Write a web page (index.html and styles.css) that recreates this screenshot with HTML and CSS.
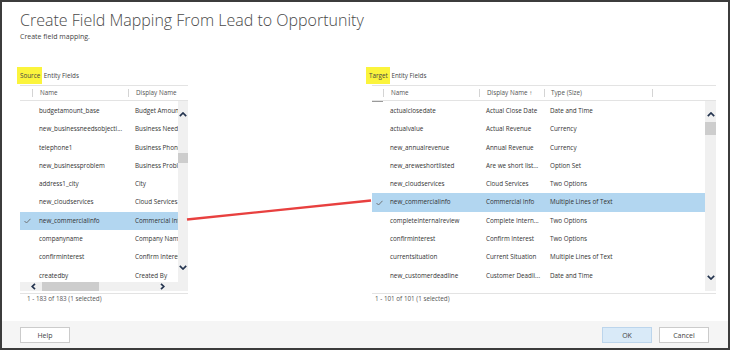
FILE: index.html
```html
<!DOCTYPE html>
<html lang="en">
  <head>
    <meta charset="UTF-8" />
    <title>Create Field Mapping</title>
    <link rel="stylesheet" href="styles.css">
  </head>

  <body>
    <div class="dialog">
      <div class="head">
        <h1 class="title">Create Field Mapping From Lead to Opportunity</h1>
        <p class="subtitle">Create field mapping.</p>
      </div>

      <div class="panels">
        <!-- Source grid -->
        <div class="panel panel-source">
          <div class="label"><span class="mark">Source</span> Entity Fields</div>
          <div class="grid">
            <div class="grid-head">
              <div class="cell c-check"></div>
              <div class="cell c-name">Name</div>
              <div class="cell c-disp">Display Name</div>
            </div>
            <div class="grid-body">
              <div class="grid-main">
                <div class="rows">
                  <div class="row"><div class="c-check"></div><div class="c-name">budgetamount_base</div><div class="c-disp">Budget Amount Base</div></div>
                  <div class="row"><div class="c-check"></div><div class="c-name">new_businessneedsobjecti...</div><div class="c-disp">Business Needs</div></div>
                  <div class="row"><div class="c-check"></div><div class="c-name">telephone1</div><div class="c-disp">Business Phone</div></div>
                  <div class="row"><div class="c-check"></div><div class="c-name">new_businessproblem</div><div class="c-disp">Business Problem</div></div>
                  <div class="row"><div class="c-check"></div><div class="c-name">address1_city</div><div class="c-disp">City</div></div>
                  <div class="row"><div class="c-check"></div><div class="c-name">new_cloudservices</div><div class="c-disp">Cloud Services</div></div>
                  <div class="row selected"><div class="c-check"><svg width="7" height="6" viewBox="0 0 7 6"><polyline points="0.5,3 2.5,5 6.5,0.8" /></svg></div><div class="c-name">new_commercialinfo</div><div class="c-disp">Commercial Info</div></div>
                  <div class="row"><div class="c-check"></div><div class="c-name">companyname</div><div class="c-disp">Company Name</div></div>
                  <div class="row"><div class="c-check"></div><div class="c-name">confirminterest</div><div class="c-disp">Confirm Interest</div></div>
                  <div class="row"><div class="c-check"></div><div class="c-name">createdby</div><div class="c-disp">Created By</div></div>
                </div>
                <div class="hscroll">
                  <svg class="arrow" width="5" height="7" viewBox="0 0 5 7"><polyline points="4,0.8 1.2,3.5 4,6.2" /></svg>
                  <div class="hthumb"></div>
                  <svg class="arrow" width="5" height="7" viewBox="0 0 5 7"><polyline points="1,0.8 3.8,3.5 1,6.2" /></svg>
                </div>
              </div>
              <div class="vscroll">
                <svg class="arrow" width="8" height="5" viewBox="0 0 8 5"><polyline points="0.8,4.2 4,1 7.2,4.2" /></svg>
                <div class="vthumb"></div>
                <svg class="arrow" width="8" height="5" viewBox="0 0 8 5"><polyline points="0.8,0.8 4,4 7.2,0.8" /></svg>
              </div>
            </div>
            <div class="grid-foot">1 - 183 of 183 (1 selected)</div>
          </div>
        </div>

        <!-- Target grid -->
        <div class="panel panel-target">
          <div class="label"><span class="mark">Target</span> Entity Fields</div>
          <div class="grid">
            <div class="grid-head">
              <div class="cell c-check"></div>
              <div class="cell c-name">Name</div>
              <div class="cell c-disp">Display Name &#8593;</div>
              <div class="cell c-type">Type (Size)</div>
              <div class="cell c-rest"></div>
            </div>
            <div class="grid-body">
              <div class="grid-main">
                <div class="rows">
                  <div class="dash"></div>
                  <div class="row"><div class="c-check"></div><div class="c-name">actualclosedate</div><div class="c-disp">Actual Close Date</div><div class="c-type">Date and Time</div></div>
                  <div class="row"><div class="c-check"></div><div class="c-name">actualvalue</div><div class="c-disp">Actual Revenue</div><div class="c-type">Currency</div></div>
                  <div class="row"><div class="c-check"></div><div class="c-name">new_annualrevenue</div><div class="c-disp">Annual Revenue</div><div class="c-type">Currency</div></div>
                  <div class="row"><div class="c-check"></div><div class="c-name">new_areweshortlisted</div><div class="c-disp">Are we short list...</div><div class="c-type">Option Set</div></div>
                  <div class="row"><div class="c-check"></div><div class="c-name">new_cloudservices</div><div class="c-disp">Cloud Services</div><div class="c-type">Two Options</div></div>
                  <div class="row selected"><div class="c-check"><svg width="7" height="6" viewBox="0 0 7 6"><polyline points="0.5,3 2.5,5 6.5,0.8" /></svg></div><div class="c-name">new_commercialinfo</div><div class="c-disp">Commercial Info</div><div class="c-type">Multiple Lines of Text</div></div>
                  <div class="row"><div class="c-check"></div><div class="c-name">completeinternalreview</div><div class="c-disp">Complete Intern...</div><div class="c-type">Two Options</div></div>
                  <div class="row"><div class="c-check"></div><div class="c-name">confirminterest</div><div class="c-disp">Confirm Interest</div><div class="c-type">Two Options</div></div>
                  <div class="row"><div class="c-check"></div><div class="c-name">currentsituation</div><div class="c-disp">Current Situation</div><div class="c-type">Multiple Lines of Text</div></div>
                  <div class="row"><div class="c-check"></div><div class="c-name">new_customerdeadline</div><div class="c-disp">Customer Deadli...</div><div class="c-type">Date and Time</div></div>
                </div>
              </div>
              <div class="vscroll">
                <svg class="arrow" width="8" height="5" viewBox="0 0 8 5"><polyline points="0.8,4.2 4,1 7.2,4.2" /></svg>
                <div class="vthumb"></div>
                <svg class="arrow" width="8" height="5" viewBox="0 0 8 5"><polyline points="0.8,0.8 4,4 7.2,0.8" /></svg>
              </div>
            </div>
            <div class="grid-foot">1 - 101 of 101 (1 selected)</div>
          </div>
        </div>
      </div>

      <!-- Buttons -->
      <div class="buttons">
        <button class="btn">Help</button>
        <span class="spacer"></span>
        <button class="btn btn-ok">OK</button>
        <button class="btn">Cancel</button>
      </div>

      <!-- Mapping line between the selected rows -->
      <svg class="connector" width="730" height="350" viewBox="0 0 730 350">
        <line x1="187" y1="219.5" x2="371" y2="200.5" />
      </svg>
    </div>
  </body>
</html>
```

FILE: styles.css
```css
* {
  box-sizing: border-box;
}

body {
  margin: 0;
  font-family: "Segoe UI", "Open Sans", sans-serif;
  color: #333;
  background: #fff;
}

.dialog {
  position: relative;
  width: 730px;
  height: 350px;
  border: 2px solid #3c3c3c;
  display: flex;
  flex-direction: column;
  background: #fff;
}

/* Header */
.head {
  padding: 7px 0 0 18px;
}

.title {
  margin: 0;
  font-size: 16px;
  font-weight: 300;
  line-height: 22px;
  color: #4a4a4a;
}

.subtitle {
  margin: 1px 0 0;
  font-size: 7px;
  line-height: 10px;
  color: #444;
}

/* Panels */
.panels {
  display: flex;
  margin-top: 25px;
  font-size: 6.3px;
}

.panel-source {
  margin-left: 15px;
  width: 171px;
}

.panel-target {
  margin-left: 178px;
  width: 350px;
}

.label {
  height: 18px;
  line-height: 17px;
  color: #444;
}

.mark {
  display: inline-block;
  background: #fbf43c;
  padding: 0 2px 0 3px;
}

.grid {
  margin-left: 3px;
}

.panel-target .grid {
  margin-left: 6px;
}

.grid-head {
  display: flex;
  align-items: center;
  height: 16px;
  border-top: 1px solid #e3e3e3;
  border-bottom: 1px solid #e3e3e3;
  color: #555;
}

.grid-head .cell {
  height: 8px;
  line-height: 8px;
  white-space: nowrap;
  overflow: hidden;
}

.grid-head .c-name,
.grid-head .c-disp,
.grid-head .c-type,
.grid-head .c-rest {
  border-left: 1px solid #d4d4d4;
}

/* Columns */
.c-check {
  flex: none;
  width: 12px;
  padding-left: 4px;
}

.c-name {
  flex: none;
  width: 96px;
  padding-left: 7px;
}

.c-disp {
  flex: none;
  width: 50px;
  padding-left: 7px;
}

.c-type {
  flex: none;
  width: 108px;
  padding-left: 6px;
}

.c-rest {
  flex: none;
  width: 30px;
}

.panel-target .c-check {
  width: 11px;
}

.panel-target .c-disp {
  width: 65px;
}

.grid-body {
  display: flex;
  height: 190px;
}

.grid-main {
  flex: 1;
  display: flex;
  flex-direction: column;
  min-width: 0;
}

.rows {
  flex: 1;
  overflow: hidden;
  padding-top: 1px;
}

.panel-target .rows {
  padding-top: 0;
}

.dash {
  width: 11px;
  height: 1px;
  background: #9a9a9a;
}

.row {
  display: flex;
  height: 18.3px;
  line-height: 18.3px;
  white-space: nowrap;
}

.row div {
  overflow: hidden;
}

.row.selected {
  background: #b2d6f0;
}

.row .c-check svg {
  vertical-align: middle;
  fill: none;
  stroke: #6a6a6a;
  stroke-width: 0.9;
}

/* Scroll bars */
.arrow {
  flex: none;
  fill: none;
  stroke: #24344f;
  stroke-width: 1.7;
}

.vscroll {
  flex: none;
  width: 10px;
  background: #f0f0f0;
  display: flex;
  flex-direction: column;
  align-items: center;
  padding: 11px 0 21px;
}

.vthumb {
  width: 10px;
  height: 10px;
  margin-top: 36px;
  margin-bottom: auto;
  background: #cdcdcd;
}

.panel-target .vscroll {
  width: 11px;
  padding-bottom: 11px;
}

.panel-target .vthumb {
  width: 11px;
  height: 13px;
  margin-top: 5px;
}

.hscroll {
  flex: none;
  height: 9px;
  background: #f0f0f0;
  display: flex;
  align-items: center;
  padding: 0 13px 0 11px;
}

.hthumb {
  width: 57px;
  height: 9px;
  margin-left: 6px;
  margin-right: auto;
  background: #cdcdcd;
}

.grid-foot {
  margin-top: 2px;
  border-top: 1px solid #e3e3e3;
  padding-left: 7px;
  line-height: 10px;
  color: #555;
}

.panel-target .grid-foot {
  padding-left: 3px;
}

/* Bottom buttons */
.buttons {
  margin-top: auto;
  height: 27px;
  background: #f5f5f5;
  display: flex;
  align-items: flex-start;
  padding: 6px 19px 0 18px;
  gap: 7px;
}

.spacer {
  flex: 1;
}

.btn {
  width: 50px;
  height: 16px;
  padding: 0;
  border: 1px solid #cbcbcb;
  background: #fff;
  font-family: "Segoe UI", "Open Sans", sans-serif;
  font-size: 7px;
  color: #444;
}

.btn-ok {
  background: #d9eaf8;
  border-color: #bcd5ec;
}

/* Connector line */
.connector {
  position: absolute;
  top: -2px;
  left: -2px;
  pointer-events: none;
}

.connector line {
  stroke: #e8403f;
  stroke-width: 2.4;
}
```
